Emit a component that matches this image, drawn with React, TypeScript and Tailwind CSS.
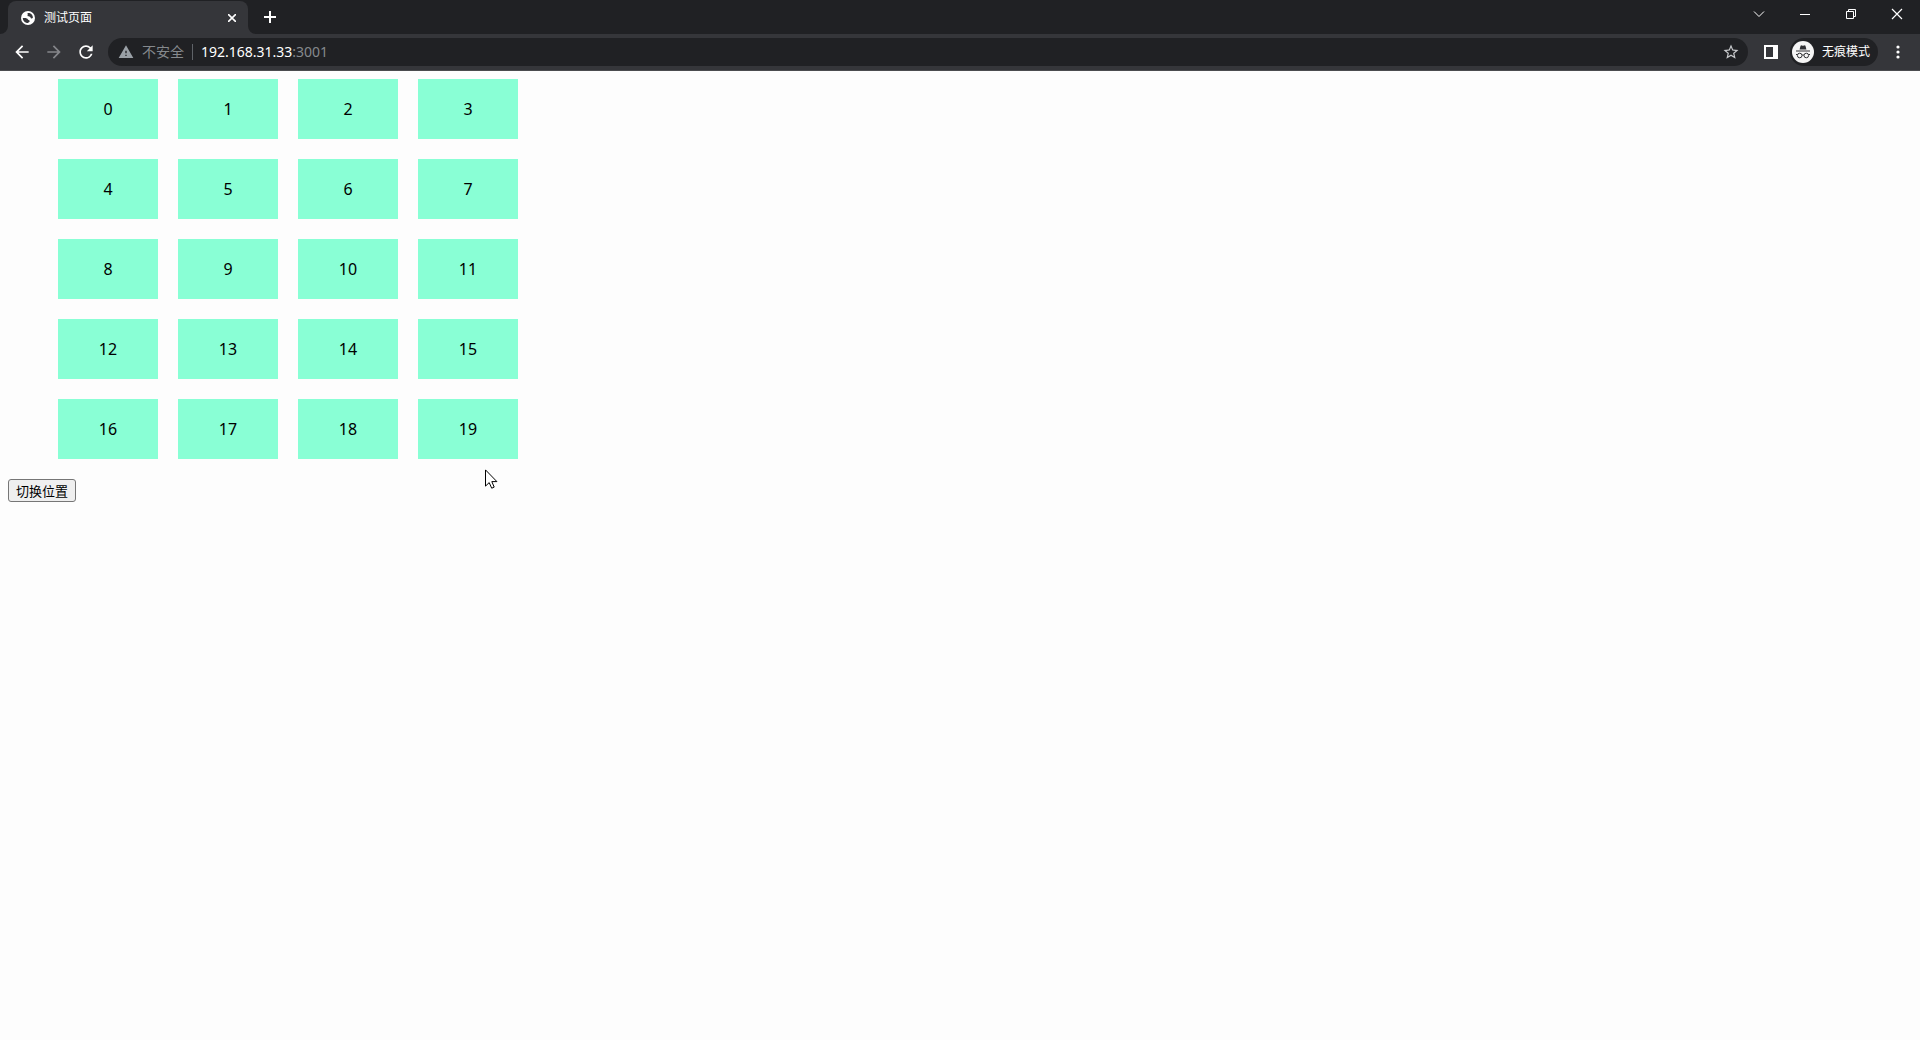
import { useState } from "react";
import { MdArrowBack, MdArrowForward, MdRefresh, MdStarBorder, MdWarning } from "react-icons/md";

function GlobeIcon() {
  return (
    <svg className="size-4" viewBox="0 0 16 16">
      <circle cx="8" cy="8" r="7" fill="#fff" />
      <path
        d="M7.8 3c1.3-.3 2.700.2 3.700 1.200.9 1 1.500 2.200 1.400 3.600-.5.7-1.400.9-2 .4-.5-.5-.3-1.200-1-1.500-.9-.3-1.900 0-2.300-.7-.3-.6.3-1 .1-1.600-.1-.5-.4-.9.1-1.400z"
        fill="#35363a"
      />
      <path
        d="M2.800 8c1.200-.1 2.900-.2 4.100.4.9.4.9 1.200 1.700 1.500.7.3 1.300.6 1 1.500-.3.800-1.200.7-1.500 1.500-.1.300-.2.200-.3.200-2.800-.2-5-2.300-5-5.100z"
        fill="#35363a"
      />
    </svg>
  );
}

function TabBar() {
  return (
    <div className="flex h-[34px] bg-[#202124] text-white">
      <svg className="size-2 self-end fill-[#35363a]" viewBox="0 0 8 8">
        <path d="M8 0v8H0a8 8 0 0 0 8-8z" />
      </svg>
      <div className="mt-px flex w-60 items-center rounded-t-lg bg-[#35363a] pl-3 pr-2">
        <GlobeIcon />
        <span className="ml-2 flex-1 text-xs">测试页面</span>
        <button type="button" aria-label="Close tab" className="flex size-4 items-center justify-center">
          <svg className="size-2" viewBox="0 0 8 8" stroke="currentColor" strokeWidth="1.6">
            <path d="M0 0l8 8M8 0L0 8" />
          </svg>
        </button>
      </div>
      <svg className="size-2 self-end fill-[#35363a]" viewBox="0 0 8 8">
        <path d="M0 0v8h8a8 8 0 0 1-8-8z" />
      </svg>
      <button type="button" aria-label="New tab" className="flex w-7 items-center justify-center">
        <svg className="size-3" viewBox="0 0 12 12" stroke="currentColor" strokeWidth="2">
          <path d="M6 0v12M0 6h12" />
        </svg>
      </button>
      <WindowControls />
    </div>
  );
}

function WindowControls() {
  const button = "flex w-[46px] items-center justify-center";
  const icon = "size-3 fill-none stroke-white";

  return (
    <div className="ml-auto flex h-7">
      <button type="button" aria-label="Search tabs" className={button}>
        <svg className={icon} viewBox="0 0 12 12">
          <path d="M1 3.5l5 5 5-5" />
        </svg>
      </button>
      <button type="button" aria-label="Minimize" className={button}>
        <svg className={icon} viewBox="0 0 12 12">
          <path d="M1 6.5h10" />
        </svg>
      </button>
      <button type="button" aria-label="Restore" className={button}>
        <svg className={icon} viewBox="0 0 12 12">
          <path d="M1.5 3.5h7v7h-7zM3.5 3.5v-2h7v7h-2" />
        </svg>
      </button>
      <button type="button" aria-label="Close" className={button}>
        <svg className={icon} viewBox="0 0 12 12">
          <path d="M1 1l10 10M11 1L1 11" strokeWidth="1.2" />
        </svg>
      </button>
    </div>
  );
}

function IncognitoBadge() {
  return (
    <svg className="size-[22px]" viewBox="0 0 22 22">
      <circle cx="11" cy="11" r="11" fill="#f5f5f5" />
      <path d="M7.6 8.500L8.500 5c.2-.6.6-.8 1.100-.6l1.400.4 1.400-.4c.5-.2.9 0 1.100.6l.9 3.500z" fill="#303134" />
      <path d="M4 9.500h14v1H4z" fill="#303134" />
      <g fill="none" stroke="#303134">
        <circle cx="7.700" cy="14.500" r="2.300" />
        <circle cx="14.300" cy="14.500" r="2.300" />
        <path d="M10 14.300c.6-.5 1.400-.5 2 0M4 13.500h1.500M16.500 13.500H18" />
      </g>
    </svg>
  );
}

function Toolbar() {
  return (
    <div className="flex h-[37px] items-center border-b border-[#4b4c4f] bg-[#35363a] pl-3 text-white">
      <button type="button" aria-label="Back">
        <MdArrowBack className="size-5" />
      </button>
      <button type="button" aria-label="Forward" className="ml-3 text-[#85868a]">
        <MdArrowForward className="size-5" />
      </button>
      <button type="button" aria-label="Reload" className="ml-3">
        <MdRefresh className="size-5" />
      </button>

      <div className="ml-3 flex h-7 flex-1 items-center rounded-full bg-[#202124] pl-2.5 pr-2 text-sm">
        <MdWarning className="size-4 text-[#9aa0a6]" />
        <span className="ml-2 text-[#85898d]">不安全</span>
        <span className="mx-2 h-4 w-px bg-[#5f6368]" />
        <a href="#">
          192.168.31.33<span className="text-[#85898d]">:3001</span>
        </a>
        <button type="button" aria-label="Bookmark" className="ml-auto text-[#c8cacd]">
          <MdStarBorder className="size-[18px]" />
        </button>
      </div>

      <button type="button" aria-label="Side panel" className="ml-4">
        <svg className="size-3.5" viewBox="0 0 14 14" fill="currentColor">
          <path fillRule="evenodd" d="M0 0h14v14H0zM2 2v10h7V2z" />
        </svg>
      </button>
      <button type="button" className="ml-3 flex h-7 items-center rounded-full bg-[#202124] pl-0.5 pr-2 text-xs">
        <IncognitoBadge />
        <span className="ml-2">无痕模式</span>
      </button>
      <button type="button" aria-label="Menu" className="ml-3 mr-3.5">
        <svg className="size-4" viewBox="0 0 16 16" fill="currentColor">
          <circle cx="8" cy="3" r="1.6" />
          <circle cx="8" cy="8" r="1.6" />
          <circle cx="8" cy="13" r="1.6" />
        </svg>
      </button>
    </div>
  );
}

export default function App() {
  const [items, setItems] = useState(Array.from({ length: 20 }, (_, i) => i));

  const shuffle = () => {
    setItems([...items].sort(() => Math.random() - 0.5));
  };

  return (
    <div className="relative min-h-screen bg-[#fdfdfd] font-['Noto_Sans','Noto_Sans_CJK_SC',sans-serif]">
      <header>
        <TabBar />
        <Toolbar />
      </header>

      <main className="p-2">
        <ul className="ml-[50px] grid w-[460px] grid-cols-4 gap-5 text-base text-black">
          {items.map((item) => (
            <li key={item} className="flex h-[60px] items-center justify-center bg-[#89ffd5]">
              {item}
            </li>
          ))}
        </ul>
        <button
          type="button"
          onClick={shuffle}
          className="mt-5 block h-[23px] rounded-[3px] border border-[#767676] bg-[#efefef] px-[7px] text-[13px] leading-5 text-black"
        >
          切换位置
        </button>
      </main>

      {/* mouse pointer */}
      <svg className="pointer-events-none absolute left-[485px] top-[469px] h-5 w-[13px]" viewBox="0 0 13 20">
        <path
          d="M.5.9v16.2l3.7-3.5 2.5 5.6 2.5-1.1-2.4-5.5h5.1z"
          fill="#fff"
          stroke="#000"
        />
      </svg>
    </div>
  );
}
